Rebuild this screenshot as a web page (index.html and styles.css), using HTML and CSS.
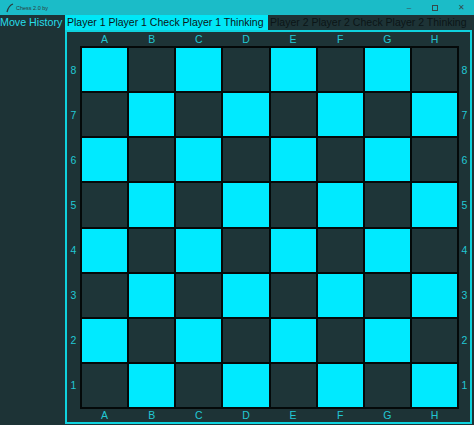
FILE: index.html
```html
<!DOCTYPE html>
<html lang="en">
<head>
    <meta charset="UTF-8">
    <meta name="viewport" content="width=device-width, initial-scale=1.0">
    <title>Chess 2.0 by</title>
    <link rel="stylesheet" href="styles.css">
</head>
<body>
    <div class="titlebar">
        <svg class="feather" width="8" height="10" viewBox="0 0 8 10">
            <path d="M7 1 C4 2 2 5 1 9" stroke="#2b3b3d" stroke-width="1.3" fill="none"/>
        </svg>
        <span class="title">Chess 2.0 by</span>
        <div class="controls">
            <span class="ctl">&#8211;</span>
            <span class="ctl box"></span>
            <span class="ctl">&#10005;</span>
        </div>
    </div>

    <div class="main">
        <div class="history">
            <div class="history-label">Move History</div>
        </div>

        <div class="game">
            <div class="tabs">
                <div class="tab active">Player 1 Player 1 Check Player 1 Thinking</div>
                <div class="tab">Player 2 Player 2 Check Player 2 Thinking</div>
            </div>

            <div class="frame">
                <div class="files">
                    <span>A</span><span>B</span><span>C</span><span>D</span>
                    <span>E</span><span>F</span><span>G</span><span>H</span>
                </div>
                <div class="middle">
                    <div class="ranks">
                        <span>8</span><span>7</span><span>6</span><span>5</span>
                        <span>4</span><span>3</span><span>2</span><span>1</span>
                    </div>
                    <div class="board">
                        <!-- 8 -->
                        <div class="sq light"></div><div class="sq dark"></div><div class="sq light"></div><div class="sq dark"></div>
                        <div class="sq light"></div><div class="sq dark"></div><div class="sq light"></div><div class="sq dark"></div>
                        <!-- 7 -->
                        <div class="sq dark"></div><div class="sq light"></div><div class="sq dark"></div><div class="sq light"></div>
                        <div class="sq dark"></div><div class="sq light"></div><div class="sq dark"></div><div class="sq light"></div>
                        <!-- 6 -->
                        <div class="sq light"></div><div class="sq dark"></div><div class="sq light"></div><div class="sq dark"></div>
                        <div class="sq light"></div><div class="sq dark"></div><div class="sq light"></div><div class="sq dark"></div>
                        <!-- 5 -->
                        <div class="sq dark"></div><div class="sq light"></div><div class="sq dark"></div><div class="sq light"></div>
                        <div class="sq dark"></div><div class="sq light"></div><div class="sq dark"></div><div class="sq light"></div>
                        <!-- 4 -->
                        <div class="sq light"></div><div class="sq dark"></div><div class="sq light"></div><div class="sq dark"></div>
                        <div class="sq light"></div><div class="sq dark"></div><div class="sq light"></div><div class="sq dark"></div>
                        <!-- 3 -->
                        <div class="sq dark"></div><div class="sq light"></div><div class="sq dark"></div><div class="sq light"></div>
                        <div class="sq dark"></div><div class="sq light"></div><div class="sq dark"></div><div class="sq light"></div>
                        <!-- 2 -->
                        <div class="sq light"></div><div class="sq dark"></div><div class="sq light"></div><div class="sq dark"></div>
                        <div class="sq light"></div><div class="sq dark"></div><div class="sq light"></div><div class="sq dark"></div>
                        <!-- 1 -->
                        <div class="sq dark"></div><div class="sq light"></div><div class="sq dark"></div><div class="sq light"></div>
                        <div class="sq dark"></div><div class="sq light"></div><div class="sq dark"></div><div class="sq light"></div>
                    </div>
                    <div class="ranks right">
                        <span>8</span><span>7</span><span>6</span><span>5</span>
                        <span>4</span><span>3</span><span>2</span><span>1</span>
                    </div>
                </div>
                <div class="files bottom">
                    <span>A</span><span>B</span><span>C</span><span>D</span>
                    <span>E</span><span>F</span><span>G</span><span>H</span>
                </div>
            </div>
        </div>
    </div>
</body>
</html>
```

FILE: styles.css
```css
* {
    box-sizing: border-box;
}

body {
    margin: 0;
    width: 474px;
    height: 425px;
    overflow: hidden;
    background-color: #1d3336;
    font-family: "Liberation Sans", Arial, sans-serif;
}

.titlebar {
    height: 15px;
    background-color: #1bbcc8;
    display: flex;
    align-items: center;
    padding-left: 6px;
}

.feather {
    margin-right: 2px;
}

.title {
    font-size: 5.5px;
    color: #2b3b3d;
}

.controls {
    margin-left: auto;
    display: flex;
    align-items: center;
}

.ctl {
    width: 26px;
    text-align: center;
    font-size: 8px;
    color: #35494b;
}

.ctl.box {
    width: 6px;
    height: 6px;
    border: 1px solid #35494b;
    margin: 0 10px;
}

.main {
    display: flex;
    height: 410px;
}

.history {
    width: 65px;
    background-color: #1d3336;
}

.history-label {
    height: 15px;
    line-height: 15px;
    font-size: 10.7px;
    color: #27dde9;
    white-space: nowrap;
}

.game {
    flex: 1;
    display: flex;
    flex-direction: column;
}

.tabs {
    display: flex;
    height: 15px;
}

.tab {
    height: 15px;
    line-height: 15px;
    font-size: 10.5px;
    color: #0b1516;
    white-space: nowrap;
    padding-left: 2px;
    width: 203px;
    overflow: hidden;
}

.tab.active {
    background-color: #00e7f7;
}

.tab:not(.active) {
    flex: 1;
    padding-left: 2px;
}

.frame {
    width: 407px;
    height: 394px;
    border: 2px solid #0fd2de;
    display: flex;
    flex-direction: column;
}

.files {
    height: 14px;
    display: grid;
    grid-template-columns: repeat(8, 1fr);
    gap: 2px;
    margin-left: 15px;
    margin-right: 13px;
    font-size: 10.5px;
    line-height: 14px;
    color: #22c8d4;
    text-align: center;
}

.files.bottom {
    height: 13px;
    line-height: 13px;
}

.middle {
    display: flex;
    height: 363px;
}

.ranks {
    width: 13px;
    display: grid;
    grid-template-rows: repeat(8, 1fr);
    padding: 2px 0;
    gap: 2px;
    align-items: center;
    font-size: 10.5px;
    color: #22c8d4;
    text-align: center;
}

.ranks.right {
    width: 11px;
}

.board {
    width: 379px;
    height: 363px;
    background-color: #040909;
    padding: 2px;
    display: grid;
    grid-template-columns: repeat(8, 1fr);
    grid-template-rows: repeat(8, 1fr);
    gap: 2px;
}

.sq.light {
    background-color: #00eaff;
}

.sq.dark {
    background-color: #1e3538;
}
```
